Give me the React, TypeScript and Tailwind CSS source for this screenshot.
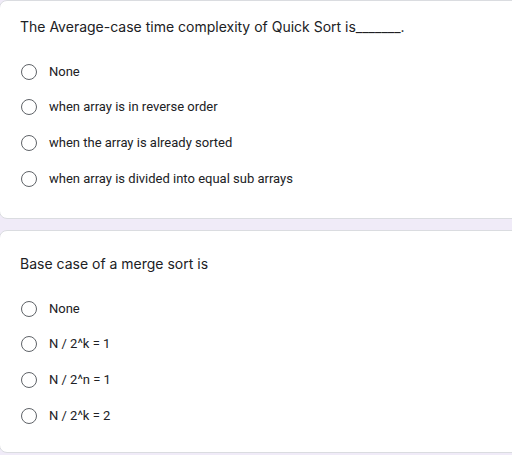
import React from 'react';

type Question = {
    title: string;
    options: string[];
    titleTop: string;
    listTop: string;
    height: string;
};

const questions: Question[] = [
    {
        title: 'The Average-case time complexity of Quick Sort is_______.',
        options: [
            'None',
            'when array is in reverse order',
            'when the array is already sorted',
            'when array is divided into equal sub arrays',
        ],
        titleTop: 'pt-[16px]',
        listTop: 'mt-[17px]',
        height: 'h-[219px]',
    },
    {
        title: 'Base case of a merge sort is',
        options: ['None', 'N / 2^k = 1', 'N / 2^n = 1', 'N / 2^k = 2'],
        titleTop: 'pt-[23px]',
        listTop: 'mt-[17px]',
        height: 'h-[223px]',
    },
];

function Radio() {
    return <span className="block w-4 h-4 rounded-full border-[1.5px] border-[#5f6368] bg-white shrink-0" />;
}

function QuestionCard({ q }: { q: Question }) {
    return (
        <div className={`w-[530px] ${q.height} bg-white rounded-lg border border-[#dadce0] px-[20px] ${q.titleTop}`}>
            <div className="h-5 leading-5 text-[14px] text-[#202124] font-['Inter',sans-serif]">
                {q.title}
            </div>
            <div className={`flex flex-col ${q.listTop}`}>
                {q.options.map((opt) => (
                    <label key={opt} className="h-[35.6px] flex items-center gap-[12px] pl-[1px]">
                        <Radio />
                        <span className="text-[13px] leading-5 text-[#202124] font-['Roboto',sans-serif]">{opt}</span>
                    </label>
                ))}
            </div>
        </div>
    );
}

export default function App() {
    return (
        <div className="w-[512px] h-[455px] overflow-hidden bg-[#f0ebf8]">
            <div className="flex flex-col gap-[11px] -ml-px">
                {questions.map((q) => (
                    <QuestionCard key={q.title} q={q} />
                ))}
            </div>
        </div>
    );
}
